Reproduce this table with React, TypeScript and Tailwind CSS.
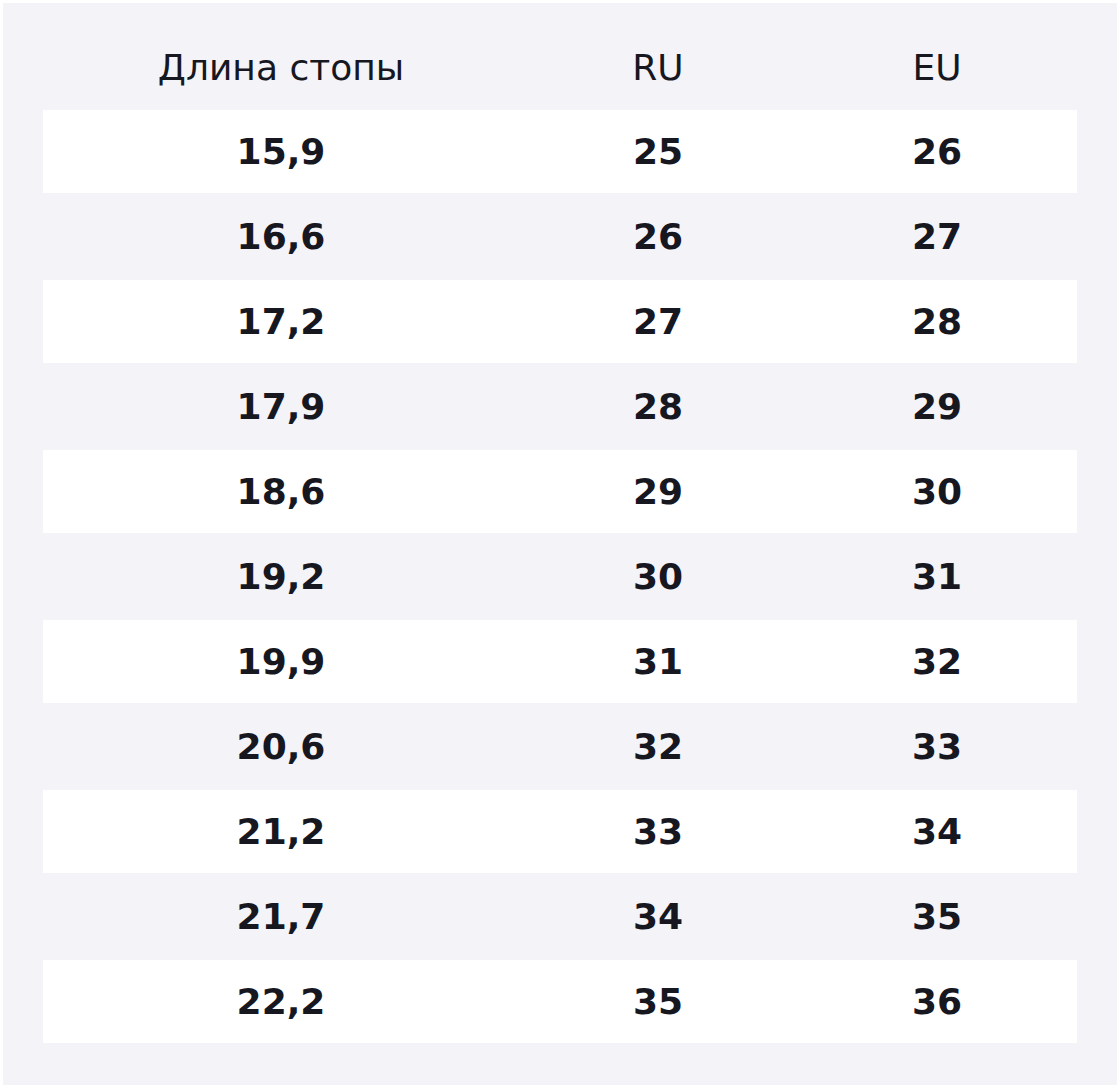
import React from "react";

const rows: [string, string, string][] = [
  ["15,9", "25", "26"],
  ["16,6", "26", "27"],
  ["17,2", "27", "28"],
  ["17,9", "28", "29"],
  ["18,6", "29", "30"],
  ["19,2", "30", "31"],
  ["19,9", "31", "32"],
  ["20,6", "32", "33"],
  ["21,2", "33", "34"],
  ["21,7", "34", "35"],
  ["22,2", "35", "36"],
];

export default function App() {
  return (
    <div className="w-[1120px] h-[1088px] bg-white p-[3px]" style={{ fontFamily: '"DejaVu Sans", sans-serif' }}>
      <div className="w-[1114px] h-[1082px] bg-[#f3f3f8] px-[40px] pt-[22px] text-[#17171f]">
        <div className="grid grid-cols-[476px_278px_280px] h-[85px] items-center text-center text-[36px]">
          <div>Длина стопы</div>
          <div>RU</div>
          <div>EU</div>
        </div>
        {rows.map((r, i) => (
          <div
            key={i}
            className={
              i % 2 === 0
                ? "grid grid-cols-[476px_278px_280px] h-[83px] items-center text-center text-[36px] font-bold bg-white"
                : "grid grid-cols-[476px_278px_280px] h-[87px] items-center text-center text-[36px] font-bold"
            }
          >
            <div>{r[0]}</div>
            <div>{r[1]}</div>
            <div>{r[2]}</div>
          </div>
        ))}
      </div>
    </div>
  );
}
